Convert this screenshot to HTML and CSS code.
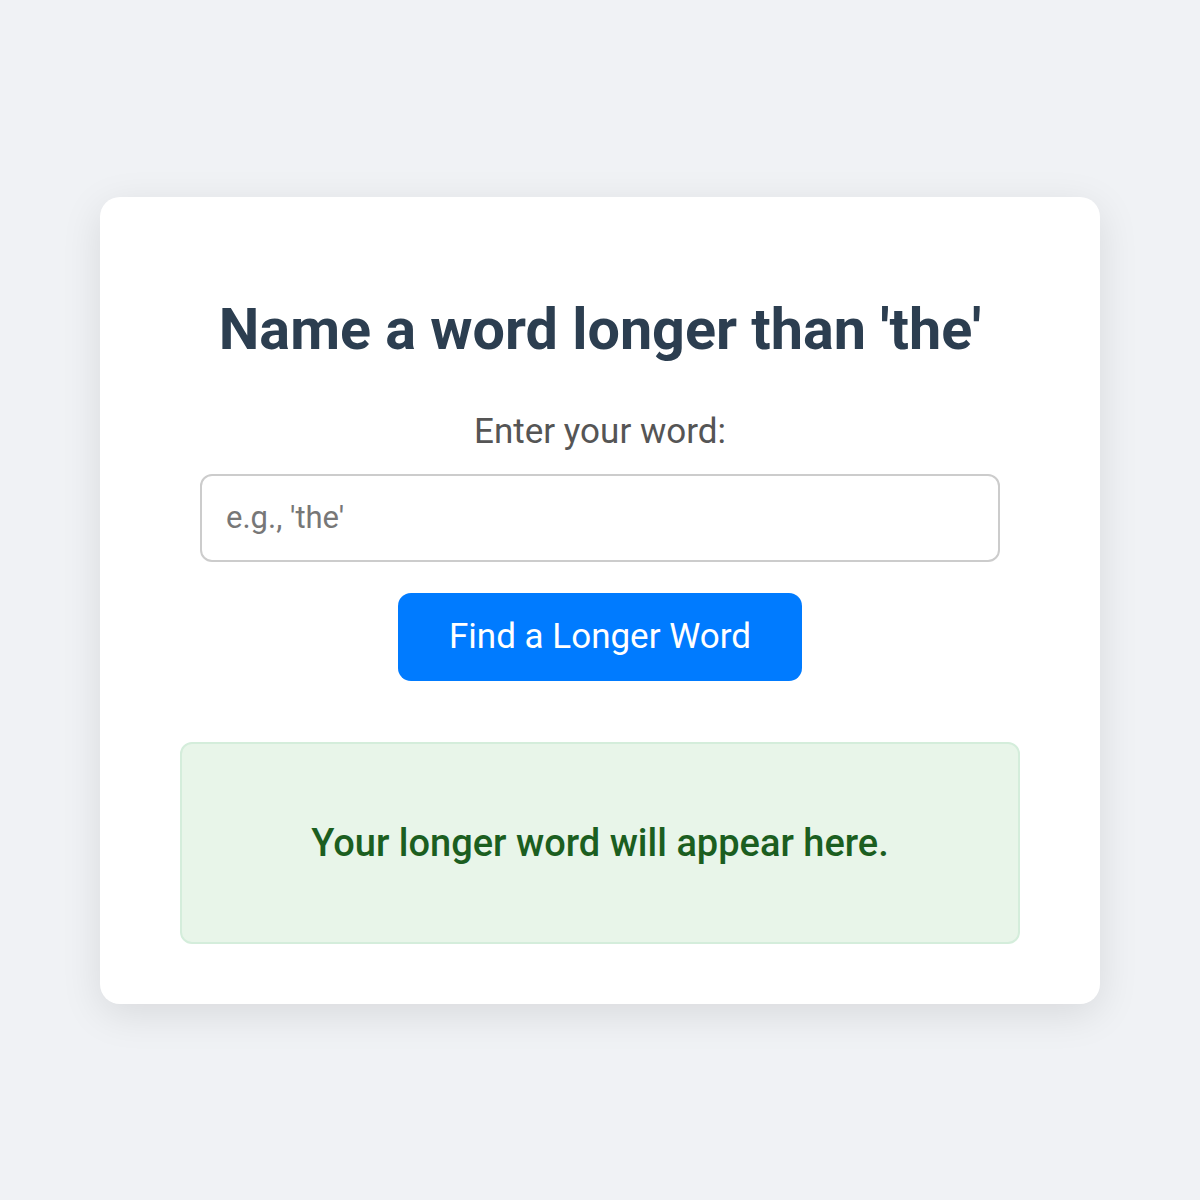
FILE: index.html
```html
<!DOCTYPE html>
<html lang="en">
<head>
    <meta charset="UTF-8">
    <meta name="viewport" content="width=device-width, initial-scale=1.0">
    <title>Longer Word</title>
    <link rel="stylesheet" href="styles.css">
</head>
<body>
<div class="card">
    <h1>Name a word longer than 'the'</h1>

    <!-- Word input -->
    <label for="word-input" class="word-label">Enter your word:</label>
    <input type="text" id="word-input" class="word-input" placeholder="e.g., 'the'">
    <button class="find-button">Find a Longer Word</button>

    <!-- Result -->
    <div class="result" id="result">Your longer word will appear here.</div>
</div>
</body>
</html>
```

FILE: styles.css
```css
body {
    font-family: Roboto, "Liberation Sans", sans-serif;
    margin: 0;
    display: flex;
    justify-content: center;
    align-items: center;
    height: 100vh;
    background-color: #f0f2f5;
}
.card {
    background-color: #fff;
    width: 1000px;
    box-sizing: border-box;
    padding: 60px 100px;
    border-radius: 20px;
    box-shadow: 0 10px 40px rgba(0, 0, 0, 0.1);
    display: flex;
    flex-direction: column;
    align-items: center;
}
h1 {
    font-size: 57.5px;
    line-height: 69px;
    font-weight: 700;
    color: #2c3e50;
    margin: 38px 0 47px;
}
.word-label {
    font-size: 35px;
    line-height: 41px;
    color: #555;
    margin-bottom: 22px;
}
.word-input {
    width: 100%;
    height: 88px;
    box-sizing: border-box;
    padding: 0 24px;
    font-family: inherit;
    font-size: 31px;
    border: 2px solid #ccc;
    border-radius: 12px;
    outline: none;
}
.word-input::placeholder {
    color: #777;
}
.find-button {
    margin-top: 31px;
    width: 404px;
    height: 88px;
    background-color: #007bff;
    color: white;
    font-family: inherit;
    font-size: 35px;
    border: none;
    border-radius: 13px;
    cursor: pointer;
}
.result {
    margin-top: 61px;
    width: 840px;
    height: 202px;
    box-sizing: border-box;
    display: flex;
    justify-content: center;
    align-items: center;
    background-color: #e8f5e9;
    border: 2px solid #d4eddb;
    border-radius: 12px;
    color: #1b5e20;
    font-size: 38px;
    font-weight: 500;
}
```
